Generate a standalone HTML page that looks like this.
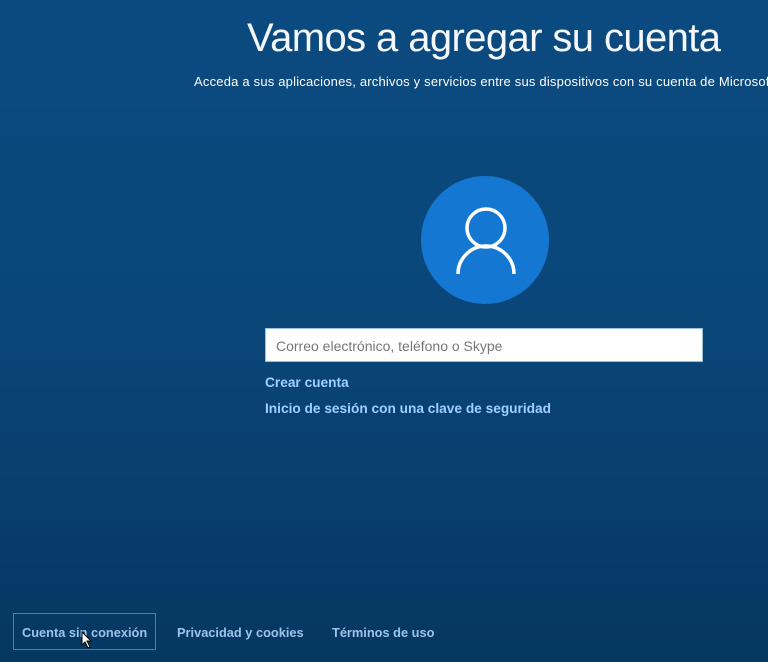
<!DOCTYPE html>
<html><head><meta charset="utf-8"><style>
body{margin:0;width:768px;height:662px;overflow:hidden;background:linear-gradient(180deg,#0b4a80 0%,#0a4678 50%,#053761 100%);font-family:"Liberation Sans",sans-serif;position:relative;color:#fff}
.a{position:absolute;white-space:nowrap}
h1{position:absolute;left:247px;top:16px;margin:0;font-weight:normal;font-size:40px;letter-spacing:-0.6px;color:#f4f8fc}
.sub{left:194px;top:74px;font-size:13px;letter-spacing:0.2px}
.circ{position:absolute;left:421px;top:176px;width:128px;height:128px;border-radius:50%;background:#1478d2}
.inp{position:absolute;left:265px;top:328px;width:436px;height:32px;background:#fff;border:1px solid #9cc0e0}
.inp span{position:absolute;left:10px;top:9px;font-size:14px;color:#777}
.lnk{color:#9fd0ff;font-size:13.7px;font-weight:bold}
.ft{color:#9cc4ea;font-size:12.8px;font-weight:bold;top:625px}
.btn{position:absolute;left:13px;top:613px;width:141px;height:35px;border:1px solid #4f7ea9}
</style></head><body>
<h1>Vamos a agregar su cuenta</h1>
<div class="a sub">Acceda a sus aplicaciones, archivos y servicios entre sus dispositivos con su cuenta de Microsoft</div>
<div class="circ"></div>
<svg class="a" style="left:0;top:0" width="768" height="662"><circle cx="486" cy="228" r="19" fill="none" stroke="#fff" stroke-width="3.5"/><path d="M458 274 A28 28 0 0 1 514 274" fill="none" stroke="#fff" stroke-width="3.5"/></svg>
<div class="inp"><span>Correo electrónico, teléfono o Skype</span></div>
<div class="a lnk" style="left:265px;top:375px">Crear cuenta</div>
<div class="a lnk" style="left:265px;top:401px">Inicio de sesión con una clave de seguridad</div>
<div class="btn"></div>
<div class="a ft" style="left:22px">Cuenta sin conexión</div>
<div class="a ft" style="left:177px">Privacidad y cookies</div>
<div class="a ft" style="left:332px">Términos de uso</div>
<svg class="a" style="left:81px;top:631px" width="12" height="18"><path d="M1 1 L1 14 L4 11 L7 17 L9 16 L6 10 L10 10 Z" fill="#fff" stroke="#000" stroke-width="1"/></svg>
</body></html>
